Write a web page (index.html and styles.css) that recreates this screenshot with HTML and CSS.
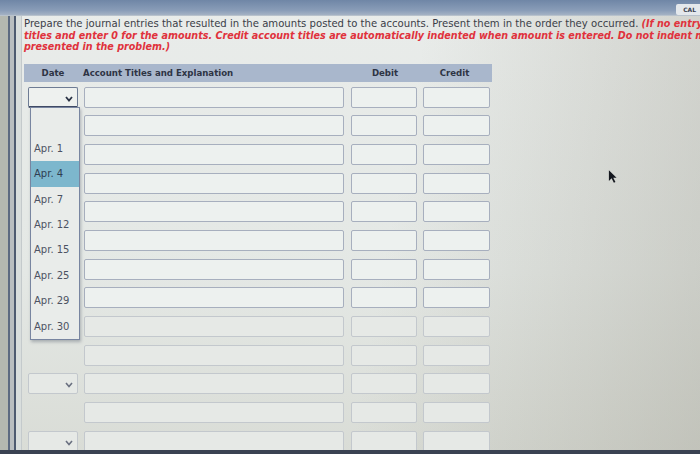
FILE: index.html
```html
<!DOCTYPE html>
<html>
<head>
<meta charset="utf-8">
<link rel="stylesheet" href="styles.css">
</head>
<body>
<div class="screen">
  <div class="topbar"><span class="calc">CAL</span></div>
  <div class="shell">
    <div class="gutter"></div>
    <div class="content">
      <p class="instr"><span class="plain">Prepare the journal entries that resulted in the amounts posted to the accounts. Present them in the order they occurred. </span><em class="warn">(If no entry is required, select "No Entry" for the account</em><br><em class="warn">titles and enter 0 for the amounts. Credit account titles are automatically indented when amount is entered. Do not indent manually. Record journal entries in the order</em><br><em class="warn">presented in the problem.)</em></p>

      <div class="table">
        <div class="thead">
          <span class="h-date">Date</span>
          <span class="h-acct">Account Titles and Explanation</span>
          <span class="h-debit">Debit</span>
          <span class="h-credit">Credit</span>
        </div>

        <div class="row"><div class="sel active"><svg class="chev" viewBox="0 0 8 6" width="8" height="6"><polyline points="1,1 4,4.5 7,1" fill="none" stroke="#2a3345" stroke-width="1.8"/></svg></div><div class="box acct"></div><div class="box num"></div><div class="box num cr"></div></div>
        <div class="row"><div class="nosel"></div><div class="box acct"></div><div class="box num"></div><div class="box num cr"></div></div>
        <div class="row"><div class="nosel"></div><div class="box acct"></div><div class="box num"></div><div class="box num cr"></div></div>
        <div class="row"><div class="nosel"></div><div class="box acct"></div><div class="box num"></div><div class="box num cr"></div></div>
        <div class="row"><div class="nosel"></div><div class="box acct"></div><div class="box num"></div><div class="box num cr"></div></div>
        <div class="row"><div class="nosel"></div><div class="box acct"></div><div class="box num"></div><div class="box num cr"></div></div>
        <div class="row"><div class="nosel"></div><div class="box acct"></div><div class="box num"></div><div class="box num cr"></div></div>
        <div class="row"><div class="nosel"></div><div class="box acct"></div><div class="box num"></div><div class="box num cr"></div></div>
        <div class="row faded"><div class="nosel"></div><div class="box acct"></div><div class="box num"></div><div class="box num cr"></div></div>
        <div class="row faded"><div class="nosel"></div><div class="box acct"></div><div class="box num"></div><div class="box num cr"></div></div>
        <div class="row faded"><div class="sel"><svg class="chev" viewBox="0 0 8 6" width="8" height="6"><polyline points="1,1 4,4.5 7,1" fill="none" stroke="#6a7080" stroke-width="1.6"/></svg></div><div class="box acct"></div><div class="box num"></div><div class="box num cr"></div></div>
        <div class="row faded"><div class="nosel"></div><div class="box acct"></div><div class="box num"></div><div class="box num cr"></div></div>
        <div class="row faded"><div class="sel"><svg class="chev" viewBox="0 0 8 6" width="8" height="6"><polyline points="1,1 4,4.5 7,1" fill="none" stroke="#6a7080" stroke-width="1.6"/></svg></div><div class="box acct"></div><div class="box num"></div><div class="box num cr"></div></div>

        <ul class="dropdown">
          <li class="opt"></li>
          <li class="opt">Apr. 1</li>
          <li class="opt hl">Apr. 4</li>
          <li class="opt">Apr. 7</li>
          <li class="opt">Apr. 12</li>
          <li class="opt">Apr. 15</li>
          <li class="opt">Apr. 25</li>
          <li class="opt">Apr. 29</li>
          <li class="opt">Apr. 30</li>
        </ul>
      </div>
    </div>
  </div>
  <svg class="cursor" viewBox="0 0 10 16" width="9" height="15"><path d="M1,1 L1,13 L4,10 L6.5,15 L8.3,14.2 L5.8,9.3 L9.5,9.3 Z" fill="#15181f"/></svg>
  <div class="bottomstrip"></div>
</div>
</body>
</html>
```

FILE: styles.css
```css
html, body {
  margin: 0;
  padding: 0;
}
body {
  width: 700px;
  height: 454px;
  overflow: hidden;
  font-family: "DejaVu Sans", Verdana, sans-serif;
}
.screen {
  position: relative;
  width: 700px;
  height: 454px;
  overflow: hidden;
  background:
    linear-gradient(100deg, rgba(0,0,0,0) 55%, rgba(150,148,135,0.35) 100%),
    linear-gradient(180deg, #e9ecea 0%, #e4e8e5 60%, #d9dcd6 100%);
}
.topbar {
  height: 15px;
  background: linear-gradient(180deg, #6f86a6 0%, #8a9db8 70%, #a4b2c4 100%);
  border-bottom: 1px solid #b8c2cc;
  display: flex;
  justify-content: flex-end;
  align-items: center;
}
.calc {
  background: #e4e8ec;
  color: #3a4050;
  font-size: 6px;
  font-weight: bold;
  padding: 2px 4px 2px 7px;
  border-radius: 2px 0 0 2px;
  margin-top: 3px;
}
.shell {
  display: flex;
  height: 435px;
}
.gutter {
  width: 22px;
  flex: none;
  background: linear-gradient(90deg,
    #b4b8b0 0px, #b4b8b0 8px,
    #5c6a80 8px, #5c6a80 10px,
    #b9bec0 10px, #b9bec0 14px,
    #4e5b70 14px, #4e5b70 16px,
    #d9dedd 16px, #d9dedd 21px,
    #c4cacc 21px, #c4cacc 22px);
}
.content {
  padding-left: 2px;
  flex: 1;
}
.instr {
  margin: 2px 0 0 0;
  font-size: 10.1px;
  line-height: 11.5px;
  white-space: nowrap;
  color: #3a3d47;
}
.warn {
  color: #e0323c;
  font-weight: bold;
  font-style: italic;
  font-size: 9.6px;
}
.table {
  position: relative;
  margin-top: 11px;
  width: 468px;
}
.thead {
  height: 18px;
  background: #a9b7cc;
  display: flex;
  align-items: center;
  font-size: 8.6px;
  font-weight: bold;
  color: #2e3444;
  margin-bottom: 5px;
}
.h-date { width: 58px; text-align: center; }
.h-acct { width: 269px; padding-left: 1px; }
.h-debit { width: 66px; text-align: center; }
.h-credit { width: 73px; text-align: center; }
.row {
  display: flex;
  height: 21px;
  margin-bottom: 7.7px;
  padding-left: 4px;
}
.sel, .nosel {
  width: 50px;
  flex: none;
  margin-right: 6px;
  box-sizing: border-box;
  position: relative;
}
.sel {
  border: 1px solid #a4acba;
  border-radius: 2px;
  background: #eef1ef;
}
.sel.active {
  border-color: #6e7c94;
  border-bottom: 2px solid #3f4b66;
}
.chev {
  position: absolute;
  right: 4px;
  top: 8px;
}
.box {
  box-sizing: border-box;
  border: 1px solid #a7afbe;
  border-radius: 2px;
  background: #edf1ef;
  height: 21px;
}
.acct { width: 260px; margin-right: 7px; }
.num { width: 66px; margin-right: 6px; }
.num.cr { width: 67px; margin-right: 0; }
.row.faded .box, .row.faded .sel {
  border-color: #c3c8cd;
  background: #e6e9e6;
}
.dropdown {
  position: absolute;
  left: 6px;
  top: 43px;
  width: 50px;
  margin: 0;
  padding: 3px 0 0 0;
  list-style: none;
  box-sizing: border-box;
  background: #e9ecea;
  border: 1px solid #7885a0;
  box-shadow: 1px 2px 3px rgba(60,70,90,0.35);
}
.opt {
  height: 25.4px;
  line-height: 25.4px;
  padding-left: 3px;
  font-size: 10px;
  color: #4c5262;
}
.opt.hl {
  background: #7db7cd;
  color: #2f3e52;
}
.cursor {
  position: absolute;
  left: 608px;
  top: 169px;
}
.bottomstrip {
  position: absolute;
  left: 0;
  bottom: 0;
  width: 700px;
  height: 4px;
  background: #3a4252;
}
```
